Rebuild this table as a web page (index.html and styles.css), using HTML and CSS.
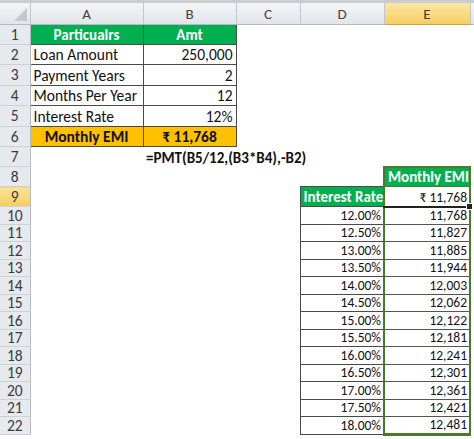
FILE: index.html
```html
<!DOCTYPE html>
<html>
<head>
<meta charset="utf-8">
<link rel="stylesheet" href="styles.css">
</head>
<body>
<div class="topbar"></div>
<table class="sheet">
<colgroup>
<col class="c-rh"><col class="c-a"><col class="c-b"><col class="c-c"><col class="c-d"><col class="c-e"><col class="c-x">
</colgroup>
<tr class="hdr">
<th class="corner"><span class="tri"></span></th><th>A</th><th>B</th><th>C</th><th>D</th><th class="sel">E</th><th class="xh"></th>
</tr>
<tr class="r20"><th class="rh">1</th><td class="grn bx c">Particualrs</td><td class="grn bx c">Amt</td><td></td><td></td><td></td><td></td></tr>
<tr class="r20"><th class="rh">2</th><td class="bx">Loan Amount</td><td class="bx r">250,000</td><td></td><td></td><td></td><td></td></tr>
<tr class="r21"><th class="rh">3</th><td class="bx">Payment Years</td><td class="bx r">2</td><td></td><td></td><td></td><td></td></tr>
<tr class="r20"><th class="rh">4</th><td class="bx">Months Per Year</td><td class="bx r">12</td><td></td><td></td><td></td><td></td></tr>
<tr class="r21"><th class="rh">5</th><td class="bx">Interest Rate</td><td class="bx r">12%</td><td></td><td></td><td></td><td></td></tr>
<tr class="r20"><th class="rh">6</th><td class="org bx c b">Monthly EMI</td><td class="org bx c b">₹ 11,768</td><td></td><td></td><td></td><td></td></tr>
<tr class="r20"><th class="rh">7</th><td></td><td class="formula">=PMT(B5/12,(B3*B4),-B2)</td><td></td><td></td><td></td><td></td></tr>
<tr class="r20"><th class="rh">8</th><td></td><td></td><td></td><td></td><td class="grn e etop c">Monthly EMI</td><td></td></tr>
<tr class="r20"><th class="rh rsel">9</th><td></td><td></td><td></td><td class="grn bx c">Interest Rate</td><td class="e r active sm">₹ 11,768<span class="handle"></span></td><td></td></tr>
<tr class="r18"><th class="rh">10</th><td></td><td></td><td></td><td class="bx r sm">12.00%</td><td class="e r sm">11,768</td><td></td></tr>
<tr class="r17"><th class="rh">11</th><td></td><td></td><td></td><td class="bx r sm">12.50%</td><td class="e r sm">11,827</td><td></td></tr>
<tr class="r18"><th class="rh">12</th><td></td><td></td><td></td><td class="bx r sm">13.00%</td><td class="e r sm">11,885</td><td></td></tr>
<tr class="r17"><th class="rh">13</th><td></td><td></td><td></td><td class="bx r sm">13.50%</td><td class="e r sm">11,944</td><td></td></tr>
<tr class="r18"><th class="rh">14</th><td></td><td></td><td></td><td class="bx r sm">14.00%</td><td class="e r sm">12,003</td><td></td></tr>
<tr class="r17"><th class="rh">15</th><td></td><td></td><td></td><td class="bx r sm">14.50%</td><td class="e r sm">12,062</td><td></td></tr>
<tr class="r18"><th class="rh">16</th><td></td><td></td><td></td><td class="bx r sm">15.00%</td><td class="e r sm">12,122</td><td></td></tr>
<tr class="r17"><th class="rh">17</th><td></td><td></td><td></td><td class="bx r sm">15.50%</td><td class="e r sm">12,181</td><td></td></tr>
<tr class="r18"><th class="rh">18</th><td></td><td></td><td></td><td class="bx r sm">16.00%</td><td class="e r sm">12,241</td><td></td></tr>
<tr class="r17"><th class="rh">19</th><td></td><td></td><td></td><td class="bx r sm">16.50%</td><td class="e r sm">12,301</td><td></td></tr>
<tr class="r18"><th class="rh">20</th><td></td><td></td><td></td><td class="bx r sm">17.00%</td><td class="e r sm">12,361</td><td></td></tr>
<tr class="r17"><th class="rh">21</th><td></td><td></td><td></td><td class="bx r sm">17.50%</td><td class="e r sm">12,421</td><td></td></tr>
<tr class="r18"><th class="rh">22</th><td></td><td></td><td></td><td class="bx r sm">18.00%</td><td class="e ebot r sm">12,481</td><td></td></tr>
</table>
</body>
</html>
```
FILE: styles.css
```css
html, body {
  margin: 0;
  padding: 0;
  background: #ffffff;
  overflow: hidden;
}
body {
  width: 474px;
  height: 439px;
  font-family: Carlito, Lato, "Open Sans", sans-serif;
  font-size: 15.5px;
  color: #111;
}
.topbar {
  height: 3px;
  background: #c9ccd1;
}
.sheet {
  border-collapse: collapse;
  table-layout: fixed;
  width: 474px;
}
.c-rh { width: 30px; }
.c-a { width: 113px; }
.c-b { width: 93px; }
.c-c { width: 64px; }
.c-d { width: 84px; }
.c-e { width: 86px; }
.c-x { width: 4px; }

td, th {
  padding: 0 3px;
  white-space: nowrap;
  overflow: visible;
  vertical-align: bottom;
  line-height: 18px;
  font-weight: normal;
}
.hdr th {
  height: 21px;
  background: linear-gradient(#f4f5f7, #e1e4e9);
  border-right: 1px solid #c3c7cd;
  border-bottom: 1px solid #b4b9c0;
  color: #444;
  text-align: center;
  vertical-align: middle;
  font-size: 15px;
}
.hdr th.sel {
  background: linear-gradient(#fbe6a0, #f6cf63);
  border-bottom: 1px solid #c6a64a;
  color: #3a3a3a;
}
.hdr th.xh {
  border-right: none;
}
.corner {
  position: relative;
}
.tri {
  position: absolute;
  right: 3px;
  bottom: 3px;
  width: 0;
  height: 0;
  border-left: 13px solid transparent;
  border-bottom: 13px solid #c3c7cd;
}
.rh {
  background: #e6e9ee;
  border-right: 1px solid #b4b9c0;
  border-bottom: 1px solid #cdd1d6;
  color: #3b3b3b;
  text-align: center;
  vertical-align: middle;
  padding: 0;
  font-size: 15.5px;
}
.rsel {
  background: linear-gradient(#fbe29a, #f5ce62);
}
.r20 { height: 20px; }
.r21 { height: 21px; }
.r18 { height: 18px; }
.r17 { height: 17px; }

.r18 td, .r17 td, .r18 th, .r17 th { line-height: 16px; }

.bx {
  border: 1px solid #4a4a4a;
}
.c { text-align: center; }
.r { text-align: right; }
.b { font-weight: bold; }
td.sm {
  font-size: 13.5px;
  line-height: 15px;
  padding-right: 2px;
  padding-bottom: 1px;
}
.grn {
  background: #00b050;
  color: #ffffff;
  font-weight: bold;
  font-size: 15px;
}
.org {
  background: #ffc000;
  color: #111;
}
.formula {
  font-weight: bold;
  color: #111;
  padding-left: 3px;
  font-size: 15px;
}
.e {
  border-left: 2px solid #4a7a2a;
  border-right: 2px solid #4a7a2a;
  border-bottom: 1px solid #555;
}
.etop {
  border-top: 2px solid #4a7a2a;
  border-bottom: 1px solid #4a7a2a;
}
.ebot {
  border-bottom: 3px solid #4a7a2a;
}
.active {
  position: relative;
  border-bottom: 2px solid #222;
}
.handle {
  position: absolute;
  right: -4px;
  bottom: -4px;
  width: 5px;
  height: 5px;
  background: #222;
  border: 1px solid #fff;
}
```
